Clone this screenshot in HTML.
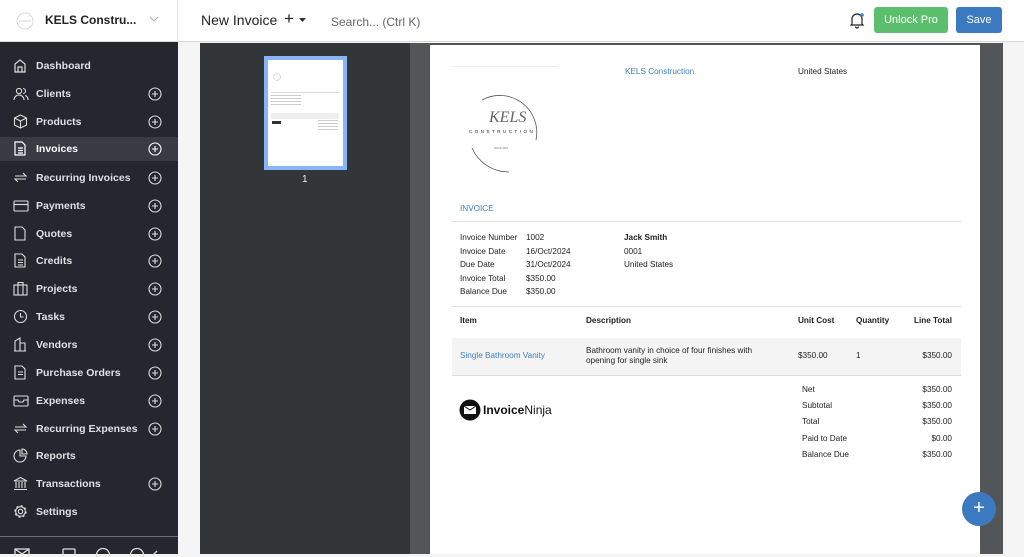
<!DOCTYPE html>
<html><head><meta charset="utf-8">
<style>
*{box-sizing:border-box;margin:0;padding:0}
body{width:1024px;height:554px;overflow:hidden;font-family:"Liberation Sans",sans-serif;background:#f5f5f5;position:relative}
.abs{position:absolute}
#side{left:0;top:42px;width:178px;height:512px;background:#24272e}
#top{left:0;top:0;width:1024px;height:42px;background:#fff;border-bottom:1px solid #d8d8d8}
.logoarea{left:0;top:0;width:178px;height:42px;border-right:1px solid #e5e5e5}
.nav{position:absolute;left:0;width:178px;height:24px;color:#dfe0e3;font-size:10.5px;font-weight:bold}
.nav.act{background:#383b43}
.nav span{position:absolute;left:36px;top:6px}
.nav svg.i{position:absolute;left:13px;top:4px}
.nav svg.p{position:absolute;left:148px;top:5px}
.pg div{font-size:8.2px}
</style></head><body>
<div id="top" class="abs">
  <div class="abs logoarea">
    <svg class="abs" style="left:15px;top:11px" width="20" height="20"><circle cx="10" cy="10" r="8" fill="none" stroke="#ccc" stroke-width="0.7"/><line x1="4" y1="10" x2="16" y2="10" stroke="#bbb" stroke-width="0.6"/></svg>
    <div class="abs" style="left:45px;top:13px;font-size:12px;font-weight:bold;color:#222">KELS Constru...</div>
    <svg class="abs" style="left:149px;top:16px" width="10" height="6"><path d="M1 1 L5 5 L9 1" fill="none" stroke="#aaa" stroke-width="1"/></svg>
  </div>
  <div class="abs" style="left:201px;top:12px;font-size:14px;color:#222">New Invoice</div>
  <div class="abs" style="left:284px;top:9px;font-size:17px;color:#222">+</div>
  <svg class="abs" style="left:299px;top:18px" width="7" height="4"><path d="M0 0 L7 0 L3.5 4Z" fill="#333"/></svg>
  <div class="abs" style="left:331px;top:15px;font-size:12px;color:#666">Search... (Ctrl K)</div>
  <svg class="abs" style="left:849px;top:12px" width="16" height="17"><path d="M3 12 L3 7 A5 5 0 0 1 13 7 L13 12 L14 13 L2 13Z M6.5 14.5 A1.5 1.5 0 0 0 9.5 14.5" fill="none" stroke="#222" stroke-width="1.2"/><circle cx="13" cy="3" r="1.8" fill="#3b82c4"/></svg>
  <div class="abs" style="left:874px;top:7px;width:74px;height:26px;background:#5cbf6e;border-radius:3px;color:#fff;font-size:11px;text-align:center;line-height:26px">Unlock Pro</div>
  <div class="abs" style="left:956px;top:7px;width:46px;height:26px;background:#3b7ac0;border-radius:3px;color:#fff;font-size:11px;text-align:center;line-height:26px">Save</div>
</div>

<div id="side" class="abs">
<div class="nav" style="top:12px"><svg class="i" width="14" height="15"><path d="M2 14 L2 6 L7 2 L12 6 L12 14Z M5 14 L5 9 L9 9 L9 14" fill="none" stroke="#ddd" stroke-width="1.2"/></svg><span>Dashboard</span></div>
<div class="nav" style="top:40px"><svg class="i" width="16" height="15"><circle cx="6" cy="5" r="2.6" fill="none" stroke="#ddd" stroke-width="1.1"/><path d="M1 14 A5 5 0 0 1 11 14 M10 2.5 A2.5 2.5 0 0 1 10 7.5 M12 9.5 A4 4 0 0 1 15 14" fill="none" stroke="#ddd" stroke-width="1.1"/></svg><span>Clients</span><svg class="p" width="14" height="14"><circle cx="7" cy="7" r="6" fill="none" stroke="#ddd" stroke-width="1.1"/><path d="M7 4v6M4 7h6" stroke="#ddd" stroke-width="1.1"/></svg></div>
<div class="nav" style="top:68px"><svg class="i" width="15" height="15"><path d="M7.5 1 L13.5 4 L13.5 11 L7.5 14 L1.5 11 L1.5 4Z M1.5 4 L7.5 7 L13.5 4 M7.5 7 L7.5 14" fill="none" stroke="#ddd" stroke-width="1.1"/></svg><span>Products</span><svg class="p" width="14" height="14"><circle cx="7" cy="7" r="6" fill="none" stroke="#ddd" stroke-width="1.1"/><path d="M7 4v6M4 7h6" stroke="#ddd" stroke-width="1.1"/></svg></div>
<div class="nav act" style="top:95px"><svg class="i" width="14" height="15"><path d="M2 1 L9 1 L12 4 L12 14 L2 14Z M5 7h5M5 9.5h5M5 12h5" fill="none" stroke="#fff" stroke-width="1.2"/></svg><span style="color:#fff">Invoices</span><svg class="p" width="14" height="14"><circle cx="7" cy="7" r="6" fill="none" stroke="#fff" stroke-width="1.1"/><path d="M7 4v6M4 7h6" stroke="#fff" stroke-width="1.1"/></svg></div>
<div class="nav" style="top:124px"><svg class="i" width="15" height="15"><path d="M2 6 L13 6 L10 3 M13 9 L2 9 L5 12" fill="none" stroke="#ddd" stroke-width="1.1"/></svg><span>Recurring Invoices</span><svg class="p" width="14" height="14"><circle cx="7" cy="7" r="6" fill="none" stroke="#ddd" stroke-width="1.1"/><path d="M7 4v6M4 7h6" stroke="#ddd" stroke-width="1.1"/></svg></div>
<div class="nav" style="top:152px"><svg class="i" width="16" height="15"><rect x="1" y="3" width="14" height="10" rx="1" fill="none" stroke="#ddd" stroke-width="1.1"/><path d="M1 6.5h14" stroke="#ddd" stroke-width="1.2"/></svg><span>Payments</span><svg class="p" width="14" height="14"><circle cx="7" cy="7" r="6" fill="none" stroke="#ddd" stroke-width="1.1"/><path d="M7 4v6M4 7h6" stroke="#ddd" stroke-width="1.1"/></svg></div>
<div class="nav" style="top:180px"><svg class="i" width="14" height="15"><path d="M2 1 L9 1 L12 4 L12 14 L2 14Z" fill="none" stroke="#ddd" stroke-width="1.1"/></svg><span>Quotes</span><svg class="p" width="14" height="14"><circle cx="7" cy="7" r="6" fill="none" stroke="#ddd" stroke-width="1.1"/><path d="M7 4v6M4 7h6" stroke="#ddd" stroke-width="1.1"/></svg></div>
<div class="nav" style="top:207px"><svg class="i" width="14" height="15"><path d="M2 1 L9 1 L12 4 L12 14 L2 14Z M5 7h5M5 9.5h5M5 12h5" fill="none" stroke="#ddd" stroke-width="1.1"/></svg><span>Credits</span><svg class="p" width="14" height="14"><circle cx="7" cy="7" r="6" fill="none" stroke="#ddd" stroke-width="1.1"/><path d="M7 4v6M4 7h6" stroke="#ddd" stroke-width="1.1"/></svg></div>
<div class="nav" style="top:235px"><svg class="i" width="15" height="15"><rect x="1" y="4" width="13" height="10" fill="none" stroke="#ddd" stroke-width="1.1"/><path d="M5 4V1.5h5V4M5 4v10M10 4v10" fill="none" stroke="#ddd" stroke-width="1.1"/></svg><span>Projects</span><svg class="p" width="14" height="14"><circle cx="7" cy="7" r="6" fill="none" stroke="#ddd" stroke-width="1.1"/><path d="M7 4v6M4 7h6" stroke="#ddd" stroke-width="1.1"/></svg></div>
<div class="nav" style="top:263px"><svg class="i" width="15" height="15"><circle cx="7.5" cy="7.5" r="6" fill="none" stroke="#ddd" stroke-width="1.1"/><path d="M7.5 4v4h3" fill="none" stroke="#ddd" stroke-width="1.1"/></svg><span>Tasks</span><svg class="p" width="14" height="14"><circle cx="7" cy="7" r="6" fill="none" stroke="#ddd" stroke-width="1.1"/><path d="M7 4v6M4 7h6" stroke="#ddd" stroke-width="1.1"/></svg></div>
<div class="nav" style="top:291px"><svg class="i" width="14" height="15"><path d="M2 14 L2 4 L7 1 L7 14 M7 6 L12 6 L12 14 M1 14h12" fill="none" stroke="#ddd" stroke-width="1.1"/></svg><span>Vendors</span><svg class="p" width="14" height="14"><circle cx="7" cy="7" r="6" fill="none" stroke="#ddd" stroke-width="1.1"/><path d="M7 4v6M4 7h6" stroke="#ddd" stroke-width="1.1"/></svg></div>
<div class="nav" style="top:319px"><svg class="i" width="14" height="15"><path d="M2 1 L9 1 L12 4 L12 14 L2 14Z M5 7h5M5 9.5h5" fill="none" stroke="#ddd" stroke-width="1.1"/></svg><span>Purchase Orders</span><svg class="p" width="14" height="14"><circle cx="7" cy="7" r="6" fill="none" stroke="#ddd" stroke-width="1.1"/><path d="M7 4v6M4 7h6" stroke="#ddd" stroke-width="1.1"/></svg></div>
<div class="nav" style="top:347px"><svg class="i" width="16" height="15"><rect x="1" y="3" width="14" height="10" rx="1" fill="none" stroke="#ddd" stroke-width="1.1"/><path d="M1 7h4l1 2h4l1-2h4" fill="none" stroke="#ddd" stroke-width="1.1"/></svg><span>Expenses</span><svg class="p" width="14" height="14"><circle cx="7" cy="7" r="6" fill="none" stroke="#ddd" stroke-width="1.1"/><path d="M7 4v6M4 7h6" stroke="#ddd" stroke-width="1.1"/></svg></div>
<div class="nav" style="top:375px"><svg class="i" width="15" height="15"><path d="M2 6 L13 6 L10 3 M13 9 L2 9 L5 12" fill="none" stroke="#ddd" stroke-width="1.1"/></svg><span>Recurring Expenses</span><svg class="p" width="14" height="14"><circle cx="7" cy="7" r="6" fill="none" stroke="#ddd" stroke-width="1.1"/><path d="M7 4v6M4 7h6" stroke="#ddd" stroke-width="1.1"/></svg></div>
<div class="nav" style="top:402px"><svg class="i" width="15" height="15"><path d="M7 2 A6 6 0 1 0 13 8 L7 8Z M9 1 A5 5 0 0 1 14 6 L9 6Z" fill="none" stroke="#ddd" stroke-width="1.1"/></svg><span>Reports</span></div>
<div class="nav" style="top:430px"><svg class="i" width="15" height="15"><path d="M1 5 L7.5 1.5 L14 5Z M3 6v6M6 6v6M9 6v6M12 6v6M1 13.5h13" fill="none" stroke="#ddd" stroke-width="1.1"/></svg><span>Transactions</span><svg class="p" width="14" height="14"><circle cx="7" cy="7" r="6" fill="none" stroke="#ddd" stroke-width="1.1"/><path d="M7 4v6M4 7h6" stroke="#ddd" stroke-width="1.1"/></svg></div>
<div class="nav" style="top:458px"><svg class="i" width="15" height="15"><circle cx="7.5" cy="7.5" r="5" fill="none" stroke="#ddd" stroke-width="2.4" stroke-dasharray="2 1.9"/><circle cx="7.5" cy="7.5" r="4.8" fill="#24272e"/><circle cx="7.5" cy="7.5" r="4.8" fill="none" stroke="#ddd" stroke-width="1"/><circle cx="7.5" cy="7.5" r="2.2" fill="none" stroke="#ddd" stroke-width="1.1"/></svg><span>Settings</span></div>
<div class="abs" style="left:0;top:494px;width:178px;height:1px;background:#6b6e74"></div>
<svg class="abs" style="left:14px;top:505px" width="150" height="10"><rect x="1" y="2" width="14" height="10" fill="none" stroke="#ddd" stroke-width="1.3"/><path d="M1 2 L8 7 L15 2" fill="none" stroke="#ddd" stroke-width="1.3"/><rect x="49" y="2" width="12" height="10" rx="1" fill="none" stroke="#ddd" stroke-width="1.3"/><circle cx="89" cy="8" r="6.5" fill="none" stroke="#ddd" stroke-width="1.3"/><circle cx="123" cy="8" r="6.5" fill="none" stroke="#ddd" stroke-width="1.3"/><path d="M143 4 L139 8" stroke="#ddd" stroke-width="1.3"/></svg>
</div>

<div class="abs" style="left:178px;top:43px;width:22px;height:511px;background:#f5f5f5"></div>
<div class="abs" style="left:200px;top:43px;width:210px;height:511px;background:#323639"></div>
<div class="abs" style="left:410px;top:43px;width:593px;height:511px;background:#525659"></div>
<div class="abs" style="left:1003px;top:43px;width:21px;height:511px;background:#f5f5f5"></div>
<div class="abs" style="left:264px;top:56px;width:83px;height:114px;background:#8ab4f8;padding:4px">
  <div style="width:100%;height:100%;background:#fff;position:relative">
    <div class="abs" style="left:5px;top:13px;width:8px;height:8px;border:1px solid #ddd;border-radius:50%"></div>
    <div class="abs" style="left:3px;top:32px;width:68px;height:1px;background:#ddd"></div>
    <div class="abs" style="left:3px;top:35px;width:30px;height:12px;background:repeating-linear-gradient(#ccc 0 1px,#fff 1px 3px)"></div>
    <div class="abs" style="left:3px;top:53px;width:68px;height:6px;background:#eee"></div>
    <div class="abs" style="left:4px;top:61px;width:9px;height:3px;background:#333"></div>
    <div class="abs" style="left:50px;top:60px;width:20px;height:12px;background:repeating-linear-gradient(#ccc 0 1px,#fff 1px 3px)"></div>
  </div>
</div>
<div class="abs" style="left:302px;top:174px;font-size:10px;color:#eee">1</div>

<div class="abs pg" style="left:430px;top:45px;width:550px;height:509px;background:#fff;color:#222">
  <div class="abs" style="left:22px;top:21px;width:106px;height:1px;background:#eee"></div>
  <div class="abs" style="left:195px;top:22px;color:#3f80c0">KELS Construction</div>
  <div class="abs" style="left:368px;top:22px">United States</div>
  <svg class="abs" style="left:34px;top:47px" width="80" height="82"><path d="M18 8 A37 37 0 0 1 72 48" fill="none" stroke="#555" stroke-width="0.8"/><path d="M8 56 A40 40 0 0 0 45 80" fill="none" stroke="#555" stroke-width="0.8"/><text x="25" y="30" font-family="Liberation Serif" font-style="italic" font-size="16" fill="#666">KELS</text><text x="5" y="41" font-size="4.5" letter-spacing="2.5" fill="#222">CONSTRUCTION</text><text x="30" y="57" font-size="2.5" fill="#777">SINCE 2015</text></svg>
  <div class="abs" style="left:30px;top:159px;color:#3f80c0">INVOICE</div>
  <div class="abs" style="left:22px;top:176px;width:509px;height:1px;background:#e0e0e0"></div>
  <div class="abs" style="left:30px;top:186px;line-height:13.6px">Invoice Number<br>Invoice Date<br>Due Date<br>Invoice Total<br>Balance Due</div>
  <div class="abs" style="left:96px;top:186px;line-height:13.6px">1002<br>16/Oct/2024<br>31/Oct/2024<br>$350.00<br>$350.00</div>
  <div class="abs" style="left:194px;top:186px;line-height:13.6px"><b>Jack Smith</b><br>0001<br>United States</div>
  <div class="abs" style="left:22px;top:261px;width:509px;height:1px;background:#e0e0e0"></div>
  <div class="abs" style="left:30px;top:271px;font-weight:bold">Item</div>
  <div class="abs" style="left:156px;top:271px;font-weight:bold">Description</div>
  <div class="abs" style="left:368px;top:271px;font-weight:bold">Unit Cost</div>
  <div class="abs" style="left:426px;top:271px;font-weight:bold">Quantity</div>
  <div class="abs" style="left:440px;top:271px;width:82px;text-align:right;font-weight:bold">Line Total</div>
  <div class="abs" style="left:22px;top:293px;width:509px;height:38px;background:#f4f4f4;border-bottom:1px solid #ddd"></div>
  <div class="abs" style="left:30px;top:306px;color:#3f80c0">Single Bathroom Vanity</div>
  <div class="abs" style="left:156px;top:301px;line-height:10px">Bathroom vanity in choice of four finishes with<br>opening for single sink</div>
  <div class="abs" style="left:368px;top:306px">$350.00</div>
  <div class="abs" style="left:426px;top:306px">1</div>
  <div class="abs" style="left:440px;top:306px;width:82px;text-align:right">$350.00</div>
  <div class="abs" style="left:372px;top:337px;line-height:16.2px">Net<br>Subtotal<br>Total<br>Paid to Date<br>Balance Due</div>
  <div class="abs" style="left:440px;top:337px;width:82px;text-align:right;line-height:16.2px">$350.00<br>$350.00<br>$350.00<br>$0.00<br>$350.00</div>
  <svg class="abs" style="left:29px;top:354px" width="22" height="22"><circle cx="11" cy="11" r="10.5" fill="#111"/><rect x="5" y="7" width="12" height="8" fill="#fff"/><path d="M5 7 L11 11 L17 7" fill="none" stroke="#111" stroke-width="1"/></svg>
  <div class="abs" style="left:53px;top:358px;font-size:12px;color:#111"><b>Invoice</b>Ninja</div>
</div>
<div class="abs" style="left:962px;top:492px;width:34px;height:34px;border-radius:50%;background:#3b7ac0;color:#fff;font-size:20px;text-align:center;line-height:33px">+</div>
</body></html>
